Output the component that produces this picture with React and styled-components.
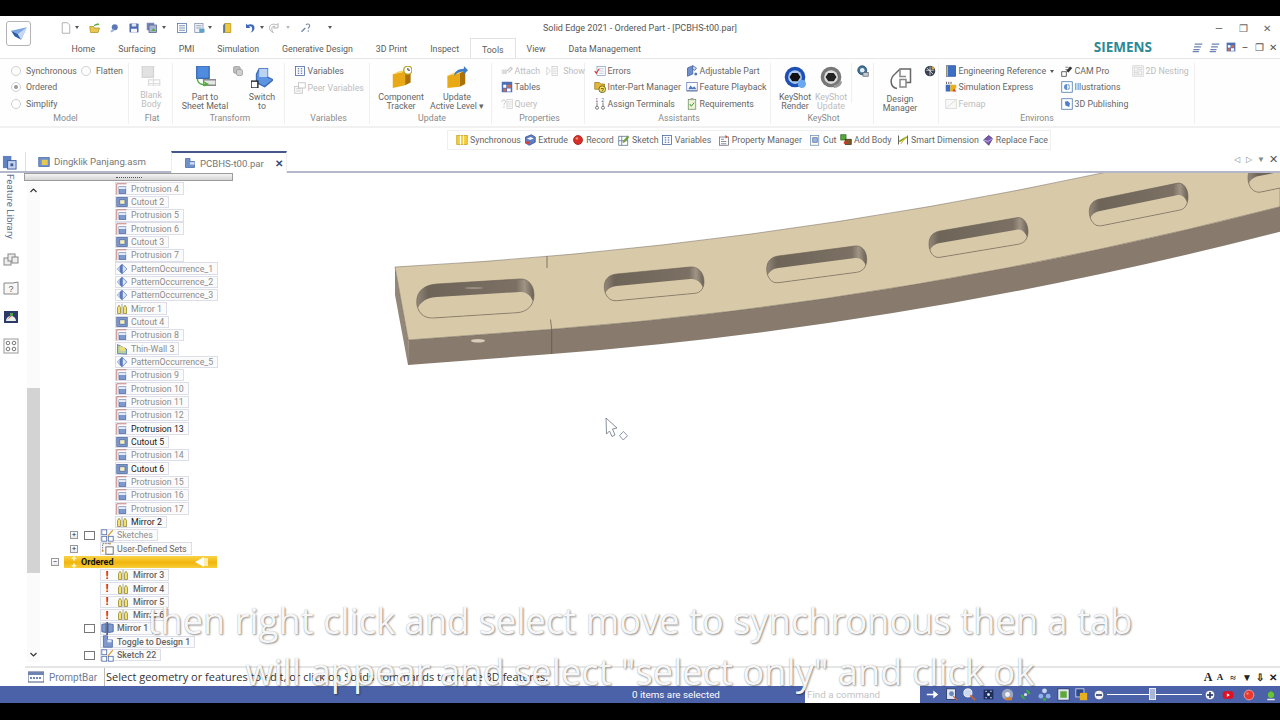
import React from 'react'
import styled, { createGlobalStyle } from 'styled-components'

const GlobalStyle = createGlobalStyle`
  html, body { margin: 0; padding: 0; background: #000; }
  * { box-sizing: border-box; }
`

const icons = {
  logo: <><path d="M1 5l14-3-5 11-3-5z" fill="#7ba6e0" /><path d="M1 5l6 3 3 5-6-3z" fill="#2e5ea8" /><path d="M7 8l8-6-5 11z" fill="#c4d8f2" /></>,
  page: <path d="M3 1h7l3 3v11H3z" fill="#fff" stroke="#9a9a9a" />,
  open: <><path d="M1 6h5l1 2h7l-2 6H2z" fill="#e8c94f" stroke="#b08f22" /><path d="M6 6c1-3 3-4 6-4l-1-1 3 2-3 2 1-1c-2 0-4 1-6 2z" fill="#56ad3c" /></>,
  dot: <><circle cx="9" cy="7" r="4" fill="#5d78b8" /><path d="M3 12l4-3 2 2-4 3z" fill="#9fb0d8" /></>,
  save: <><rect x="2" y="2" width="12" height="12" rx="1" fill="#4d6cb0" /><rect x="5" y="2" width="6" height="4" fill="#dfe6f4" /><rect x="4" y="9" width="8" height="5" fill="#f2f4fa" /></>,
  saveall: <><rect x="1" y="1" width="10" height="10" fill="#7387b8" /><rect x="4" y="4" width="10" height="10" fill="#a7b3cf" stroke="#52628c" /><path d="M7 12l3-4 3 4z" fill="#55ab3c" /></>,
  list: <><rect x="2" y="2" width="12" height="12" fill="#fff" stroke="#4f6fa8" /><path d="M4 5h8M4 8h8M4 11h8" stroke="#4f6fa8" /></>,
  sheet: <><rect x="1" y="2" width="11" height="12" fill="#eef1f7" stroke="#7f8ea8" /><path d="M3 5h7M3 8h7" stroke="#7f8ea8" /><rect x="7" y="9" width="7" height="5" fill="#5da2c8" /></>,
  book: <><path d="M5 2h8v12H5z" fill="#f0c93b" stroke="#b38d1c" /><path d="M3 4l2-2v12l-2 1z" fill="#3d5f9c" /></>,
  undo: <path d="M4 2v6h6L8 6c3-1 5 1 4 5-.4 1.500-1 2-2 3 4-1 6-4 5-8-1-3-5-4-9-2z" fill="#3f68b8" />,
  redo: <path d="M12 2v6H6l2-2c-3-1-5 1-4 5 .4 1.500 1 2 2 3-4-1-6-4-5-8 1-3 5-4 9-2z" fill="none" stroke="#9c9c9c" />,
  helpq: <><path d="M2 13l5-5" stroke="#7488b0" strokeWidth="2" /><path d="M8 4c1-2 5-2 5 1 0 2-2 2-2 4M11 11v2" fill="none" stroke="#7c8ca8" strokeWidth="1.500" /></>,
  slantlist: <path d="M4 3h11M3 7h10M2 11h9M1 14h9" fill="none" stroke="#6c84b4" strokeWidth="2" />,
  protrusion: <><path d="M1 15V1h13" fill="none" stroke="#b55a58" /><rect x="4" y="5" width="9" height="9" fill="#7f99cf" stroke="#51699f" /><rect x="4" y="5" width="9" height="3" fill="#e3eaf7" /></>,
  cutout: <><rect x="1" y="2" width="14" height="12" fill="#7c97cc" stroke="#4e689f" /><rect x="5" y="5" width="7" height="6" fill="#f3edc0" stroke="#4e689f" /></>,
  pattern: <><path d="M8 1l7 7-7 7-7-7z" fill="#5a78bb" /><path d="M9 3l5 5-5 5z" fill="#dde5f5" /><path d="M1 8l4-4v8z" fill="#c2cfeb" /></>,
  mirror: <><path d="M2 14V6l2-3 2 3v8z" fill="#f3e26c" stroke="#8e8130" /><path d="M8 1v14" stroke="#8d8d8d" /><path d="M10 14V6l2-3 2 3v8z" fill="#f3e26c" stroke="#8e8130" /></>,
  thinwall: <><path d="M2 2v12l12 1V8z" fill="#b8cfa0" stroke="#4f6fa8" /><path d="M5 4l7 2v5l-7-1z" fill="#e9de7e" /></>,
  sketch: <><rect x="1" y="1" width="6" height="6" fill="#fff" stroke="#4d6aa4" /><rect x="1" y="9" width="6" height="6" fill="#fff" stroke="#4d6aa4" /><rect x="9" y="9" width="6" height="6" fill="#fff" stroke="#4d6aa4" /><path d="M8 8l6-7 1 1-6 7z" fill="#d89a2c" /></>,
  sets: <><path d="M2 11V2h9" fill="none" stroke="#666" strokeDasharray="2 1" /><rect x="6" y="6" width="9" height="9" fill="#fff" stroke="#555" /><rect x="1" y="10" width="2" height="2" fill="#d28b22" /><rect x="10" y="1" width="2" height="2" fill="#d28b22" /></>,
  mirrorbody: <><path d="M1 3l5-1v11l-5-1z" fill="#7f99cf" stroke="#3f5c9c" /><path d="M9 2l6 1v9l-6 1z" fill="#7f99cf" stroke="#3f5c9c" /><path d="M7.500 0v16" stroke="#14244f" strokeWidth="1.500" /></>,
  toggle: <><path d="M3 1h5v5h6v9H3z" fill="#7f99cf" stroke="#4d6aa4" /><rect x="8" y="6" width="5" height="3" fill="#dfe6f4" /></>,
  boxes: <><rect x="1" y="7" width="7" height="7" fill="#eee" stroke="#888" /><rect x="5" y="3" width="7" height="7" fill="#eee" stroke="#888" /><rect x="9" y="6" width="6" height="6" fill="#eee" stroke="#888" /></>,
  folderq: <><path d="M1 3h9l5-1v12H1z" fill="#f7f7f7" stroke="#888" /><text x="8" y="12" fontSize="9" fontFamily="Liberation Sans" textAnchor="middle" fill="#666">?</text></>,
  gauge: <><rect x="1" y="2" width="14" height="12" fill="#2c3a6a" /><path d="M3 12a5 5 0 0 1 10 0z" fill="#e8f0e8" /><path d="M4 11l5-6 1 1z" fill="#c94040" /><path d="M7 4h3v3H7z" fill="#50a050" /></>,
  dots: <><rect x="1" y="1" width="14" height="14" fill="#fff" stroke="#999" /><circle cx="5" cy="5" r="1.800" fill="none" stroke="#777" /><circle cx="11" cy="5" r="1.800" fill="none" stroke="#777" /><circle cx="5" cy="11" r="1.800" fill="none" stroke="#777" /><circle cx="11" cy="11" r="1.800" fill="none" stroke="#777" /></>,
  docpart: <><rect x="1" y="1" width="9" height="13" fill="#5f82c4" /><rect x="6" y="6" width="9" height="9" fill="#c5d3ee" stroke="#3c5a9c" /><rect x="9" y="9" width="3" height="3" fill="#3c5a9c" /></>,
  asm: <><rect x="1" y="2" width="14" height="12" fill="#6f92cc" stroke="#4a6aa4" /><rect x="5" y="5" width="8" height="7" fill="#e8c850" /></>,
  par: <><path d="M2 2h6v4h6v8H2z" fill="#6f92cc" stroke="#4a6aa4" /><rect x="8" y="7" width="6" height="3" fill="#d9e2f4" /></>,
  blank: <><rect x="1" y="0" width="9" height="9" fill="#c8c8c8" stroke="#aaa" /><path d="M6 14h9M10 10v6M6 11h9v5H6z" fill="none" stroke="#bdbdbd" /></>,
  partsheet: <><rect x="2" y="0" width="9" height="9" fill="#4f8ce0" stroke="#3a6ab0" /><path d="M7 14h9v-4H7z" fill="#e6e6e6" stroke="#888" /><path d="M3 9c0 3 2 4 5 4l-1-2 4 2-4 2 1-1c-4 0-6-2-6-5z" fill="#4fae3a" /></>,
  grayboxes: <><rect x="2" y="2" width="9" height="9" rx="2" fill="#bcbcbc" stroke="#999" /><rect x="6" y="6" width="8" height="8" rx="2" fill="#d0d0d0" stroke="#999" /></>,
  switchto: <><path d="M6 2h6v6l4 2-6 5-6-3V6z" fill="#5f96e4" stroke="#3c6cb4" /><path d="M6 2h6v6H6z" fill="#bcd4f4" /><rect x="0" y="11" width="5" height="5" fill="#fff" stroke="#222" /></>,
  vars: <><rect x="2" y="2" width="12" height="12" fill="#fff" stroke="#3f5f9c" /><path d="M5 5h2M9 5h2M5 8h2M9 8h2M5 11h2M9 11h2" stroke="#3f5f9c" strokeWidth="1.500" /></>,
  peer: <><rect x="1" y="6" width="10" height="9" fill="#fff" stroke="#777" /><rect x="6" y="1" width="9" height="7" fill="#fff" stroke="#777" /><path d="M3 9h6M3 12h6" stroke="#777" /></>,
  tracker: <><path d="M2 6l9-2v10l-9 2z" fill="#e9a916" /><path d="M11 4l4-2v10l-4 2z" fill="#a97308" /><path d="M2 6l4-2 9-2-4 2z" fill="#f6d35c" /><circle cx="13" cy="3" r="3" fill="#fff" stroke="#b9a530" /><path d="M13 1.500V3h1.500" fill="none" stroke="#333" strokeWidth=".7" /></>,
  update: <><path d="M1 7l9-2v10l-9 1z" fill="#e9a916" /><path d="M10 5l4-2v10l-4 2z" fill="#a97308" /><path d="M1 7l4-2 9-2-4 2z" fill="#f6d35c" /><path d="M6 7c0-3 3-5 7-5V0l3 3-3 3V4c-3 0-5 1-7 3z" fill="#3f7cc8" /></>,
  attach: <><rect x="1" y="6" width="7" height="6" fill="#bbb" /><path d="M8 8l5-5 2 2-5 5" fill="none" stroke="#999" strokeWidth="1.500" /></>,
  show: <><path d="M1 3l5 5-5 5z" fill="none" stroke="#999" /><rect x="8" y="2" width="7" height="12" fill="#fff" stroke="#999" /><path d="M9 5h5M9 8h5M9 11h5" stroke="#999" /></>,
  tables: <><rect x="1" y="1" width="14" height="14" fill="#4f6fb4" /><rect x="3" y="5" width="4" height="4" fill="#fff" /><rect x="8" y="5" width="5" height="4" fill="#d66a4a" /><rect x="3" y="10" width="4" height="4" fill="#d66a4a" /><rect x="8" y="10" width="5" height="4" fill="#fff" /></>,
  query: <><path d="M1 5c0-3 5-3 5 0 0 2-2 2-2 4M4 11v2" fill="none" stroke="#888" strokeWidth="1.300" /><rect x="8" y="2" width="7" height="12" fill="#fff" stroke="#999" /><path d="M9 5h5M9 8h5M9 11h5" stroke="#999" /></>,
  errors: <><rect x="4" y="2" width="11" height="12" fill="#fff" stroke="#8aa0c4" /><path d="M7 5h6M7 8h6M7 11h6" stroke="#aab8d0" /><path d="M1 8l2 3 4-6" fill="none" stroke="#d13030" strokeWidth="1.500" /></>,
  interpart: <><path d="M1 2h6l2 2h5v7H1z" fill="#e2b93c" stroke="#97761a" /><circle cx="11" cy="11" r="4.500" fill="#f7e35c" stroke="#4a4a20" /><text x="11" y="14" fontSize="8" fontFamily="Liberation Sans" textAnchor="middle" fill="#222">?</text></>,
  terminals: <><circle cx="4" cy="13" r="2" fill="none" stroke="#555" /><circle cx="12" cy="13" r="2" fill="none" stroke="#555" /><path d="M4 11V6M12 11V6" stroke="#555" /><text x="2" y="5" fontSize="6" fontFamily="Liberation Sans" fill="#3f5f9c">1</text><text x="10" y="5" fontSize="6" fontFamily="Liberation Sans" fill="#3f5f9c">2</text></>,
  adjustable: <><path d="M2 4l7-3v11l-7 3z" fill="#6f8fd0" stroke="#3f5c9c" /><path d="M9 1l5 3-2 3-3-1z" fill="#d9e2f4" stroke="#3f5c9c" /><circle cx="13" cy="12" r="2" fill="#5d78b8" /></>,
  playback: <><rect x="1" y="2" width="14" height="11" fill="#fff" stroke="#5d78b8" /><path d="M3 11l3-5 3 3 2-2 3 4z" fill="#4e78c4" /><rect x="1" y="12" width="14" height="2" fill="#7d8db0" /></>,
  requirements: <><rect x="3" y="2" width="10" height="13" fill="#eef3d8" stroke="#6f8a5f" /><rect x="6" y="0" width="4" height="3" fill="#aaa" /><path d="M5 8l2 3 4-5" fill="none" stroke="#3c9a3c" strokeWidth="1.300" /></>,
  keyrender: <><circle cx="8" cy="8" r="7.500" fill="#1e50b4" /><circle cx="8" cy="8" r="5" fill="#aac8f0" /><path d="M4 8l2-3h4l2 3-2 3H6z" fill="#111" /><circle cx="13" cy="13" r="3" fill="#6aa8f0" /></>,
  keyupdate: <><circle cx="8" cy="8" r="7.500" fill="#777" /><circle cx="8" cy="8" r="5" fill="#ddd" /><path d="M4 8l2-3h4l2 3-2 3H6z" fill="#222" /><path d="M10 15c3 0 5-2 5-4" fill="none" stroke="#999" strokeWidth="2" /></>,
  globe: <><circle cx="7" cy="7" r="6" fill="#3f7398" stroke="#26485f" /><circle cx="7" cy="7" r="3" fill="#e8eef4" /><rect x="8" y="10" width="7" height="5" fill="#c0ccd8" stroke="#666" /></>,
  design: <><path d="M6 15C1 14 1 8 5 5l3-3h7v9h-4l-2 3" fill="none" stroke="#666" /><path d="M8 2v5h4" fill="none" stroke="#888" /><rect x="8" y="9" width="4" height="5" fill="#fff" stroke="#888" /></>,
  ball: <><circle cx="8" cy="8" r="7" fill="#3a4250" /><path d="M3 7h10M8 2v12M4 4l8 8" stroke="#e9e9e9" /><circle cx="12" cy="4" r="2" fill="#d2a13c" /></>,
  engref: <><rect x="2" y="1" width="12" height="14" fill="#3f6fc4" stroke="#274f98" /><rect x="2" y="1" width="2" height="14" fill="#e2b93c" /></>,
  simex: <><rect x="1" y="5" width="14" height="9" fill="#e8e8e8" /><path d="M1 5h6v9H1z" fill="#3f6fc4" /><path d="M7 5h8v4l-5 5H7z" fill="#e8b020" /><path d="M12 10l3 4h-5z" fill="#d04020" /><path d="M2 1v3M5 1v3M8 1v3" stroke="#333" /></>,
  femap: <><rect x="1" y="2" width="14" height="12" fill="#f6f6f6" stroke="#aaa" /><path d="M2 13L14 3" stroke="#aaa" /></>,
  cam: <><rect x="1" y="9" width="6" height="6" fill="#fff" stroke="#333" /><path d="M7 8l5-6 3 2-5 6z" fill="#333" /><path d="M6 3h4M6 6h4" stroke="#555" /></>,
  illus: <><rect x="1" y="1" width="14" height="14" fill="#fff" stroke="#3f6fa8" /><circle cx="8" cy="8" r="4" fill="#5f8fd0" /><path d="M8 4l4 4-4 4z" fill="#d9e8f8" /></>,
  pub3d: <><rect x="1" y="1" width="14" height="14" fill="#fff" stroke="#3f6fa8" /><path d="M5 5l4-1 3 3-1 5-5-2z" fill="#4f7fc8" /></>,
  nesting: <><rect x="1" y="1" width="14" height="14" fill="#f4f4f4" stroke="#aaa" /><rect x="3" y="3" width="4" height="5" fill="none" stroke="#aaa" /><rect x="9" y="3" width="4" height="3" fill="none" stroke="#aaa" /><rect x="3" y="10" width="4" height="3" fill="none" stroke="#aaa" /><rect x="9" y="8" width="4" height="5" fill="none" stroke="#aaa" /></>,
  sync: <><rect x="1" y="2" width="14" height="12" fill="#f2cf3e" stroke="#c89f18" /><path d="M6 2v12M10 2v12" stroke="#fff" strokeWidth="1.500" /></>,
  extrude: <><path d="M2 4l8-3 5 3v7l-8 4-5-3z" fill="#5f7fc4" stroke="#344f8f" /><path d="M4 6l5-2 4 2-5 2z" fill="#f3f3f3" /><rect x="2" y="10" width="6" height="3" fill="#d94040" /></>,
  record: <><circle cx="8" cy="8" r="6" fill="#d83028" stroke="#9a1a14" /><circle cx="6.500" cy="6" r="1.800" fill="#f08878" /></>,
  sketchcmd: <><rect x="1" y="3" width="12" height="12" fill="#fff" stroke="#55708f" /><path d="M5 3v12M1 9h12" stroke="#55708f" /><path d="M7 9l6-7 2 2-6 7-3 1z" fill="#6f9f3c" /></>,
  propmgr: <><rect x="2" y="4" width="12" height="11" fill="#fff" stroke="#667" /><path d="M4 7h4M4 10h7M4 13h7" stroke="#667" /><path d="M10 1l3 3-3 2z" fill="#d04a30" /></>,
  cut: <><rect x="2" y="2" width="11" height="13" fill="#fffbe0" stroke="#6f8fc0" /><rect x="5" y="5" width="6" height="6" fill="#9fb8e0" stroke="#4f6fa8" /></>,
  addbody: <><rect x="1" y="1" width="7" height="7" fill="#56a83a" stroke="#2f6a20" /><rect x="7" y="7" width="8" height="7" fill="#7d5a2c" stroke="#4a3010" /><path d="M5 10h4v3H5z" fill="#d83028" /></>,
  smartdim: <><path d="M2 2v12M14 2v12" stroke="#333" /><path d="M3 10L13 4" stroke="#78a820" strokeWidth="2" /><path d="M5 13l7-9" stroke="#e8b020" strokeWidth="1.500" /></>,
  replace: <><path d="M2 8l7-6 5 4-5 9z" fill="#7a58b0" stroke="#43307a" /><path d="M2 8l6 2 6-4" fill="none" stroke="#d9cdf0" /></>,
  promptbar: <><rect x="0" y="3" width="16" height="10" fill="#fff" stroke="#44587f" /><rect x="0" y="3" width="16" height="3" fill="#6f84b0" /><path d="M2 9h12" stroke="#7088b8" strokeDasharray="2 1" strokeWidth="2" /></>,
  arrowgo: <path d="M1 7h8V3l6 5-6 5V9H1z" fill="#fff" />,
  zoomarea: <><rect x="2" y="1" width="11" height="13" fill="#dfe6f2" stroke="#26365e" /><circle cx="8" cy="7" r="3" fill="#6d88b8" /><path d="M10 10l5 5" stroke="#d06030" strokeWidth="1.500" /></>,
  zoom: <><circle cx="6" cy="6" r="5" fill="#cbd8ee" stroke="#fff" /><path d="M9 9l6 6" stroke="#d06030" strokeWidth="2" /></>,
  fit: <><rect x="2" y="2" width="12" height="12" fill="#1d2f60" /><path d="M4 4h2M10 4h2M4 12h2M10 12h2M7 7h2v2H7z" stroke="#fff" fill="#fff" /></>,
  views: <><circle cx="8" cy="8" r="7" fill="#9aa6bc" /><circle cx="8" cy="8" r="3" fill="#eef" /><path d="M4 13l8-2 2 4H6z" fill="#d08030" /></>,
  spin: <><path d="M8 2a6 6 0 0 1 6 6l-3-1z" fill="#38b038" /><path d="M8 14a6 6 0 0 1-6-6l3 1z" fill="#38b038" /><circle cx="8" cy="8" r="2" fill="#dde" /></>,
  flower: <><circle cx="8" cy="3.500" r="3" fill="#c7d8f4" /><circle cx="3.500" cy="10" r="3" fill="#8fb0e8" /><circle cx="12.500" cy="10" r="3" fill="#8fb0e8" /><circle cx="8" cy="14" r="2" fill="#38b038" /></>,
  shaded: <><rect x="1" y="1" width="14" height="14" fill="#dfe6f2" stroke="#26365e" /><rect x="4" y="4" width="8" height="8" fill="#5fa838" /></>,
  shaded2: <><rect x="1" y="1" width="10" height="10" fill="#2f4a8c" stroke="#dde" /><rect x="6" y="6" width="9" height="9" fill="#e8b020" /></>,
  minus: <><circle cx="8" cy="8" r="6.500" fill="#f2f2f2" stroke="#33477f" /><rect x="4" y="7" width="8" height="2" fill="#1d2f60" /></>,
  plus: <><circle cx="8" cy="8" r="6.500" fill="#f2f2f2" stroke="#33477f" /><path d="M4 7h3V4h2v3h3v2H9v3H7V9H4z" fill="#1d2f60" /></>,
  redtube: <><rect x="1" y="3" width="14" height="10" rx="3" fill="#e01020" /><path d="M6.500 5.500l4 2.500-4 2.500z" fill="#fff" /></>,
  reddot: <><circle cx="8" cy="8" r="6.500" fill="#e83830" stroke="#f8b8a8" /><circle cx="6" cy="6" r="1.500" fill="#f89888" /></>,
  greenup: <><path d="M8 2l5 5H3z" fill="#48b020" /><circle cx="8" cy="8" r="4" fill="#68c830" /><rect x="3" y="13" width="10" height="2" fill="#e8e8e8" /></>
}

const Page = styled.div`
  position: relative;
  width: 1280px;
  height: 720px;
  overflow: hidden;
  display: flex;
  flex-direction: column;
  background: #fff;
  font-family: Roboto, "Open Sans", sans-serif;
  font-size: 8.8px;
  color: #5c5c5c;
`
const BlackBar = styled.div`
  flex: none;
  height: ${p => p.$h}px;
  background: #000;
`
const IconSvg = styled.svg`
  flex: none;
  display: block;
  width: ${p => p.$size}px;
  height: ${p => p.$size}px;
  opacity: ${p => (p.$off ? 0.5 : 1)};
`
function Ico({ name, size = 12, off }) {
  return <IconSvg $size={size} $off={off} viewBox="0 0 16 16">{icons[name]}</IconSvg>
}

/* header */
const Header = styled.div`
  flex: none;
  height: 42px;
  display: flex;
`
const LogoCell = styled.div`
  flex: none;
  width: 60px;
  padding: 5px 0 0 6px;
`
const LogoBox = styled.div`
  width: 25px;
  height: 25px;
  border: 1px solid #b4b4b4;
  border-radius: 3px;
  display: flex;
  align-items: center;
  justify-content: center;
`
const HeaderStack = styled.div`
  flex: 1;
  display: flex;
  flex-direction: column;
`
const TitleRow = styled.div`
  height: 25px;
  display: flex;
  align-items: center;
  padding-bottom: 2px;
`
const Qat = styled.div`
  width: 483px;
  display: flex;
  align-items: center;
`
const QatSlot = styled.div`
  flex: none;
  width: ${p => p.$w}px;
  display: flex;
  justify-content: center;
`
const Caret = styled.span`
  display: block;
  width: 0;
  height: 0;
  border-left: 2.5px solid transparent;
  border-right: 2.5px solid transparent;
  border-top: 3px solid ${p => p.$color || '#555'};
  margin-left: ${p => p.$ml || 0}px;
`
const Title = styled.div`
  font-size: 9px;
  color: #555;
  white-space: nowrap;
`
const WinButtons = styled.div`
  margin-left: auto;
  display: flex;
  padding-top: 2px;
  padding-right: 1px;
`
const WinButton = styled.div`
  width: 24px;
  height: 14px;
  display: flex;
  align-items: center;
  justify-content: center;
  color: #666;
  font-size: 10px;
`
const TabRow = styled.div`
  height: 17px;
  display: flex;
  align-items: flex-end;
`
const RibbonTab = styled.div`
  height: 20px;
  padding: 0 11.5px;
  line-height: 22px;
  white-space: nowrap;
  ${p => p.$active && 'background:#fff;border:1px solid #e2e2e2;border-bottom:0;margin:0 -1px;'}
`
const SiemensArea = styled.div`
  margin-left: auto;
  display: flex;
  align-items: center;
  height: 22px;
`
const Siemens = styled.div`
  font-family: "Open Sans", sans-serif;
  font-size: 13.5px;
  font-weight: 700;
  color: #2d8a95;
  margin-right: 37px;
`
const MiniBtn = styled.div`
  width: ${p => p.$w}px;
  display: flex;
  justify-content: center;
  color: #555;
  font-size: 10px;
`

/* ribbon */
const Ribbon = styled.div`
  flex: none;
  height: 70px;
  display: flex;
  border-top: 1px solid #e6e6e6;
  border-bottom: 2px solid #f1f1f1;
  background: #fefefe;
`
const Group = styled.div`
  flex: none;
  width: ${p => p.$w}px;
  margin: 4px 0 2px;
  display: flex;
  flex-direction: column;
  border-right: 1px solid #efefef;
`
const GroupBody = styled.div`
  flex: 1;
  display: flex;
  padding-left: ${p => p.$pl || 0}px;
  min-height: 0;
`
const GroupName = styled.div`
  height: 12px;
  line-height: 12px;
  text-align: center;
  padding-left: 3px;
  padding-right: ${p => p.$pr || 0}px;
  color: #8a8a8a;
  font-size: 8.8px;
`
const Col = styled.div`
  flex: none;
  width: ${p => p.$w}px;
  display: flex;
  flex-direction: column;
`
const SmallRow = styled.div`
  height: 16.8px;
  display: flex;
  align-items: center;
  gap: ${p => (p.$gap === undefined ? 1.5 : p.$gap)}px;
  white-space: nowrap;
  color: ${p => (p.$off ? '#bdbdbd' : '#666')};
`
const Radio = styled.span`
  flex: none;
  width: 10px;
  height: 10px;
  border-radius: 50%;
  border: 1px solid #cfcfcf;
  margin-right: 5px;
  margin-left: ${p => p.$ml || 0}px;
  display: flex;
  align-items: center;
  justify-content: center;
  &::after {
    content: '';
    display: ${p => (p.$on ? 'block' : 'none')};
    width: 4px;
    height: 4px;
    border-radius: 50%;
    background: #999;
  }
`
const BigButton = styled.div`
  flex: none;
  width: ${p => p.$w}px;
  padding-top: 3px;
  display: flex;
  flex-direction: column;
  align-items: center;
  text-align: center;
  line-height: 9.4px;
  color: ${p => (p.$off ? '#bdbdbd' : '#666')};
  span { margin-top: 5px; white-space: pre-line; }
`
const TopIcon = styled.div`
  flex: none;
  width: ${p => p.$w}px;
  padding-top: ${p => (p.$pt === undefined ? 2 : p.$pt)}px;
  display: flex;
  justify-content: center;
`
const SideIcon = styled(TopIcon)`
  height: 40px;
  margin-left: 5px;
  border-left: 1px solid #efefef;
`

/* floating command bar */
const CommandStrip = styled.div`
  flex: none;
  height: 24px;
  padding: 2px 0 2px 447px;
`
const CommandBox = styled.div`
  width: 604px;
  height: 20px;
  display: flex;
  align-items: center;
  padding-left: 8px;
  border: 1px solid #efefef;
  color: #666;
`
const CommandItem = styled.div`
  display: flex;
  align-items: center;
  gap: 2px;
  margin-right: ${p => p.$mr}px;
  white-space: nowrap;
`

/* doc tabs */
const DocBar = styled.div`
  flex: none;
  height: 21px;
  display: flex;
  align-items: stretch;
  border-bottom: 2px solid #b3b7c9;
`
const RailHead = styled.div`
  flex: none;
  width: 26px;
  padding: 3px 0 0 2px;
  border-right: 1px solid #e0e0e0;
`
const DocTab = styled.div`
  flex: none;
  width: ${p => p.$w}px;
  margin-left: ${p => p.$ml || 0}px;
  padding-left: ${p => p.$pl}px;
  display: flex;
  align-items: center;
  gap: 4px;
  font-size: 9.6px;
  color: #777;
  white-space: nowrap;
  ${p => p.$active && 'background:#fff;border-top:2px solid #46578c;border-left:1px solid #eee;border-right:1px solid #eee;margin-top:-1px;margin-bottom:-2px;'}
`
const CloseMark = styled.span`
  margin-left: auto;
  margin-right: 3px;
  font-size: 10px;
  color: #344a7c;
  font-weight: 700;
`
const DocNav = styled.div`
  margin-left: auto;
  display: flex;
  align-items: center;
  padding: 0 1px 4px 0;
`
const DocNavBtn = styled.span`
  width: 12px;
  text-align: center;
  font-size: ${p => p.$fs || 8}px;
  color: ${p => p.$color || '#888'};
`

/* main */
const Main = styled.div`
  flex: 1;
  min-height: 0;
  display: flex;
`
const Rail = styled.div`
  flex: none;
  width: 25px;
  display: flex;
  flex-direction: column;
  align-items: center;
  gap: 13px;
  padding-top: 1px;
  padding-right: 4px;
`
const RailText = styled.div`
  writing-mode: vertical-rl;
  height: 66px;
  font-size: 9.8px;
  color: #64708f;
  white-space: nowrap;
  margin-bottom: -2px;
`
const TreePanel = styled.div`
  flex: none;
  width: 215px;
  display: flex;
  flex-direction: column;
`
const Splitter = styled.div`
  flex: none;
  width: 209px;
  height: 8px;
  margin: 0 0 1px -1px;
  border: 1px solid #9c9c9c;
  background: linear-gradient(#f4f4f4, #d4d4d4);
  display: flex;
  align-items: center;
  justify-content: center;
  &::after {
    content: '';
    width: 26px;
    border-top: 1px dotted #555;
  }
`
const TreeBody = styled.div`
  flex: 1;
  display: flex;
  min-height: 0;
`
const Scroll = styled.div`
  flex: none;
  width: 13px;
  height: 480px;
  margin-left: 2px;
  background: #fbfbfb;
  display: flex;
  flex-direction: column;
`
const Chevron = styled.svg`
  flex: none;
  display: block;
  width: 13px;
  height: 16px;
`
const ScrollTrack = styled.div`
  flex: 1;
  padding-top: 190px;
`
const Thumb = styled.div`
  height: 185px;
  background: #d3d3d3;
`
const List = styled.div`
  flex: 1;
`
const Row = styled.div`
  height: 13.33px;
  display: flex;
  align-items: center;
  padding-left: ${p => p.$indent}px;
`
const Expander = styled.span`
  flex: none;
  width: 8px;
  height: 8px;
  margin-right: ${p => p.$mr}px;
  border: 1px solid #999;
  background: linear-gradient(#fff, #eaeaea);
  display: flex;
  align-items: center;
  justify-content: center;
  font-size: 8px;
  line-height: 1;
  color: #333;
`
const Check = styled.span`
  flex: none;
  width: 11px;
  height: 9px;
  margin-right: 5px;
  border: 1px solid #777;
  background: #fff;
`
const Tile = styled.div`
  height: 12.4px;
  display: inline-flex;
  align-items: center;
  border: 1px solid #dcdfea;
  background: #fbfbfb;
  padding-right: 4px;
  white-space: nowrap;
  font-size: 8.8px;
  gap: ${p => p.$gap}px;
  font-weight: ${p => (p.$strong ? 500 : 400)};
  color: ${p => p.$color};
`
const Bang = styled.span`
  flex: none;
  width: 12px;
  text-align: center;
  color: #d0111b;
  font-weight: 800;
  font-size: 10px;
`
const OrderedBar = styled.div`
  flex: none;
  width: 153px;
  height: 12.4px;
  display: flex;
  align-items: center;
  padding-left: 7px;
  background: linear-gradient(#f8d44a, #f2b50c 55%, #f7cf3c);
  color: #111;
  font-weight: 700;
  font-size: 9px;
`
const OrderedMark = styled.svg`
  flex: none;
  display: block;
  width: 6px;
  height: 12px;
  margin-right: 4px;
`
const OrderedArrow = styled.svg`
  flex: none;
  display: block;
  width: 13px;
  height: 10px;
  margin-left: auto;
  margin-right: 9px;
`
const Viewport = styled.div`
  flex: 1;
  min-width: 0;
`
const Scene = styled.svg`
  display: block;
  width: 100%;
  height: 100%;
`

/* prompt + status */
const PromptBar = styled.div`
  flex: none;
  height: 20px;
  margin-left: 25px;
  display: flex;
  align-items: center;
  border-top: 2px solid #e6e6e6;
`
const PromptName = styled.div`
  flex: none;
  width: 79px;
  padding-left: 3px;
  display: flex;
  align-items: center;
  gap: 5px;
  font-size: 10px;
  color: #6f7c96;
`
const PromptText = styled.div`
  flex: none;
  height: 18px;
  line-height: 17px;
  padding-left: 1px;
  border-left: 1px solid #bbb;
  font-family: "Open Sans", sans-serif;
  font-size: 11px;
  color: #333;
  white-space: nowrap;
`
const PromptTools = styled.div`
  margin-left: auto;
  display: flex;
  align-items: center;
  font-family: "Liberation Serif", serif;
  color: #222;
`
const PromptTool = styled.span`
  width: ${p => p.$w}px;
  text-align: center;
  font-size: ${p => p.$fs || 10}px;
  font-weight: 700;
`
const StatusBar = styled.div`
  flex: none;
  height: 17px;
  display: flex;
  align-items: center;
  background: #4b62a8;
  color: #fff;
  font-size: 9.8px;
`
const StatusText = styled.div`
  flex: none;
  width: 173px;
  margin-left: 632px;
  white-space: nowrap;
`
const FindBox = styled.div`
  flex: none;
  width: 115px;
  height: 17px;
  line-height: 17px;
  padding-left: 2px;
  background: #fff;
  color: #c4c4c4;
  margin-right: 3px;
`
const StatusSlot = styled.div`
  flex: none;
  width: ${p => p.$w || 18.7}px;
  display: flex;
  justify-content: center;
`
const Slider = styled.div`
  flex: none;
  position: relative;
  width: 95px;
  height: 1px;
  background: #fff;
`
const SliderKnob = styled.div`
  position: absolute;
  left: 42px;
  top: -6px;
  width: 7px;
  height: 12px;
  background: #aab6d6;
  border: 1px solid #e8ecf6;
`
const Caption = styled.div`
  position: absolute;
  left: 0;
  right: 0;
  top: 595px;
  text-align: center;
  font-family: "Open Sans", sans-serif;
  font-size: 36.2px;
  letter-spacing: 0.05px;
  line-height: 51px;
  color: rgba(255, 255, 255, 0.95);
  text-shadow: 1px 1px 2px rgba(0, 0, 0, 0.4), 0 0 1px rgba(0, 0, 0, 0.35);
  white-space: nowrap;
  pointer-events: none;
`

const P = (label, color = '#8c8c8c') => ({ label, icon: 'protrusion', color })
const C = (label, color = '#8c8c8c') => ({ label, icon: 'cutout', color })
const O = label => ({ label, icon: 'pattern', color: '#8c8c8c' })
const M = (label, color = '#8c8c8c') => ({ label, icon: 'mirror', color })

const features = [
  P('Protrusion 4'), C('Cutout 2'), P('Protrusion 5'), P('Protrusion 6'), C('Cutout 3'), P('Protrusion 7'),
  O('PatternOccurrence_1'), O('PatternOccurrence_2'), O('PatternOccurrence_3'), M('Mirror 1'), C('Cutout 4'),
  P('Protrusion 8'), { label: 'Thin-Wall 3', icon: 'thinwall', color: '#8c8c8c' }, O('PatternOccurrence_5'),
  P('Protrusion 9'), P('Protrusion 10'), P('Protrusion 11'), P('Protrusion 12'), P('Protrusion 13', '#222'),
  C('Cutout 5', '#222'), P('Protrusion 14'), C('Cutout 6', '#222'), P('Protrusion 15'), P('Protrusion 16'),
  P('Protrusion 17'), M('Mirror 2', '#222')
]

const slots = [
  { l: [416.7, 301.7], r: [534, 295], tl: [436.7, 284], tr: [520, 279], bl: [433, 318], br: [516.7, 312.7], d: 13 },
  { l: [604.3, 286.7], r: [704, 281.7], tl: [616.7, 274], tr: [690, 267], bl: [616.7, 300.7], br: [695, 293.3], d: 12 },
  { l: [766.7, 269], r: [866.7, 259.3], tl: [778.3, 256], tr: [855, 246], bl: [778.3, 282.7], br: [856.7, 272.3], d: 12 },
  { l: [929, 244], r: [1028, 231.7], tl: [940, 231], tr: [1016.7, 217.7], bl: [940, 257.3], br: [1018, 244.3], d: 12 },
  { l: [1089.3, 211.7], r: [1188, 196.7], tl: [1100, 199], tr: [1176.7, 183.3], bl: [1101.7, 225.7], br: [1180, 210], d: 12 },
  { l: [1248, 178], r: [1346, 163], tl: [1259, 165], tr: [1335, 150], bl: [1261, 192], br: [1338, 176], d: 11 }
]

const mix = (a, b, t) => a + (b - a) * t

function slotPath(s) {
  const k = 0.6
  const m = (s.tr[1] - s.tl[1]) / (s.tr[0] - s.tl[0])
  return [
    `M${s.l[0]} ${s.l[1]}`,
    `C${s.l[0]} ${mix(s.l[1], s.tl[1], k)} ${mix(s.tl[0], s.l[0], k)} ${s.tl[1] + m * (s.l[0] - s.tl[0]) * k} ${s.tl[0]} ${s.tl[1]}`,
    `L${s.tr[0]} ${s.tr[1]}`,
    `C${mix(s.tr[0], s.r[0], k)} ${s.tr[1] + m * (s.r[0] - s.tr[0]) * k} ${s.r[0]} ${mix(s.r[1], s.tr[1], k)} ${s.r[0]} ${s.r[1]}`,
    `C${s.r[0]} ${mix(s.r[1], s.br[1], k)} ${mix(s.br[0], s.r[0], k)} ${s.br[1] + m * (s.r[0] - s.br[0]) * k} ${s.br[0]} ${s.br[1]}`,
    `L${s.bl[0]} ${s.bl[1]}`,
    `C${mix(s.bl[0], s.l[0], k)} ${s.bl[1] + m * (s.l[0] - s.bl[0]) * k} ${s.l[0]} ${mix(s.l[1], s.bl[1], k)} ${s.l[0]} ${s.l[1]}Z`
  ].join(' ')
}

function Slot({ s, id }) {
  const d = slotPath(s)
  return (
    <>
      <clipPath id={id}><path d={d} /></clipPath>
      <path d={d} fill="url(#wall)" />
      <g clipPath={`url(#${id})`}>
        <path d={d} transform={`translate(0 ${s.d})`} fill="#d8c9a9" />
      </g>
      <path d={d} fill="none" stroke="#6a6052" strokeWidth="0.6" />
    </>
  )
}

function Part() {
  const top = 'M395 267 Q751 248.500 1107 172 L1280 172 L1280 206.700 Q914 301 551.700 329.300 L408.300 340Z'
  const side = 'M408.300 340 L551.700 329.300 Q914 301 1280 206.700 L1280 231.700 Q914 326 551.700 354 L408 365Z'
  return (
    <Scene viewBox="240 173 1040 493" preserveAspectRatio="none">
      <defs>
        <linearGradient id="wall" x1="0" x2="1" y1="0" y2="0">
          <stop offset="0" stopColor="#93887a" />
          <stop offset="0.1" stopColor="#6e6458" />
          <stop offset="0.85" stopColor="#7b7063" />
          <stop offset="0.92" stopColor="#a09585" />
          <stop offset="1" stopColor="#6a6054" />
        </linearGradient>
      </defs>
      <path d="M395 267 L395 295 L408 365 L408.300 340Z" fill="#93877a" />
      <path d={side} fill="#887b6d" />
      <path d={top} fill="#d8c9a9" stroke="#6a6052" strokeWidth="0.5" />
      {slots.map((s, i) => <Slot key={i} s={s} id={`slot${i}`} />)}
      <path d="M547 256v12M550.500 319.500l1.200 10M551.700 329.300V354" stroke="#5b5247" strokeWidth="0.7" fill="none" />
      <ellipse cx="478" cy="340.700" rx="7" ry="1.700" fill="#d8cdb8" />
      <ellipse cx="474" cy="288" rx="9" ry="1" fill="#9a9082" />
      <path d="M606 418 L617 428 L612.500 429 L615 435 L612 436.500 L609.500 431 L606.500 434Z" fill="#fff" stroke="#6b7280" strokeWidth="0.8" />
      <path d="M623.300 431.500 L627.500 435.700 L623.300 440 L619.500 435.700Z" fill="#fff" stroke="#6b7a99" strokeWidth="0.8" />
    </Scene>
  )
}

export default function App() {
  return (
    <Page>
      <GlobalStyle />
      <BlackBar $h={16} />
      <Header>
        <LogoCell><LogoBox><Ico name="logo" size={18} /></LogoBox></LogoCell>
        <HeaderStack>
          <TitleRow>
            <Qat>
              <QatSlot $w={11}><Ico name="page" /></QatSlot>
              <QatSlot $w={12}><Caret /></QatSlot>
              <QatSlot $w={24}><Ico name="open" /></QatSlot>
              <QatSlot $w={14}><Ico name="dot" /></QatSlot>
              <QatSlot $w={26}><Ico name="save" /></QatSlot>
              <QatSlot $w={10}><Ico name="saveall" /></QatSlot>
              <QatSlot $w={14}><Caret /></QatSlot>
              <QatSlot $w={22}><Ico name="list" /></QatSlot>
              <QatSlot $w={14}><Ico name="sheet" /></QatSlot>
              <QatSlot $w={6}><Caret /></QatSlot>
              <QatSlot $w={28}><Ico name="book" /></QatSlot>
              <QatSlot $w={16}><Ico name="undo" /></QatSlot>
              <QatSlot $w={10}><Caret /></QatSlot>
              <QatSlot $w={16}><Ico name="redo" /></QatSlot>
              <QatSlot $w={10}><Caret $color="#bbb" /></QatSlot>
              <QatSlot $w={26}><Ico name="helpq" /></QatSlot>
              <QatSlot $w={22}><Caret /></QatSlot>
            </Qat>
            <Title>Solid Edge 2021 - Ordered Part - [PCBHS-t00.par]</Title>
            <WinButtons>
              <WinButton>—</WinButton>
              <WinButton>❐</WinButton>
              <WinButton>✕</WinButton>
            </WinButtons>
          </TitleRow>
          <TabRow>
            <RibbonTab>Home</RibbonTab>
            <RibbonTab>Surfacing</RibbonTab>
            <RibbonTab>PMI</RibbonTab>
            <RibbonTab>Simulation</RibbonTab>
            <RibbonTab>Generative Design</RibbonTab>
            <RibbonTab>3D Print</RibbonTab>
            <RibbonTab>Inspect</RibbonTab>
            <RibbonTab $active>Tools</RibbonTab>
            <RibbonTab>View</RibbonTab>
            <RibbonTab>Data Management</RibbonTab>
            <SiemensArea>
              <Siemens>SIEMENS</Siemens>
              <MiniBtn $w={17}><Ico name="slantlist" size={11} /></MiniBtn>
              <MiniBtn $w={17}><Ico name="slantlist" size={11} /></MiniBtn>
              <MiniBtn $w={15}><Ico name="tables" size={10} /></MiniBtn>
              <MiniBtn $w={14}>–</MiniBtn>
              <MiniBtn $w={14}>❐</MiniBtn>
              <MiniBtn $w={14}>✕</MiniBtn>
            </SiemensArea>
          </TabRow>
        </HeaderStack>
      </Header>

      <Ribbon>
        <Group $w={129}>
          <GroupBody $pl={11}>
            <Col $w={118}>
              <SmallRow $gap={0}><Radio />Synchronous<Radio $ml={4} />Flatten</SmallRow>
              <SmallRow $gap={0}><Radio $on />Ordered</SmallRow>
              <SmallRow $gap={0}><Radio />Simplify</SmallRow>
            </Col>
          </GroupBody>
          <GroupName>Model</GroupName>
        </Group>
        <Group $w={44}>
          <GroupBody>
            <BigButton $w={44} $off><Ico name="blank" size={20} off /><span>{'Blank\nBody'}</span></BigButton>
          </GroupBody>
          <GroupName>Flat</GroupName>
        </Group>
        <Group $w={112}>
          <GroupBody $pl={7}>
            <BigButton $w={50}><Ico name="partsheet" size={22} /><span>{'Part to\nSheet Metal'}</span></BigButton>
            <TopIcon $w={16}><Ico name="grayboxes" /></TopIcon>
            <BigButton $w={32}><Ico name="switchto" size={22} /><span>{'Switch\nto'}</span></BigButton>
          </GroupBody>
          <GroupName>Transform</GroupName>
        </Group>
        <Group $w={85}>
          <GroupBody $pl={9}>
            <Col $w={76}>
              <SmallRow><Ico name="vars" />Variables</SmallRow>
              <SmallRow $off><Ico name="peer" off />Peer Variables</SmallRow>
            </Col>
          </GroupBody>
          <GroupName>Variables</GroupName>
        </Group>
        <Group $w={122}>
          <GroupBody $pl={5}>
            <BigButton $w={52}><Ico name="tracker" size={22} /><span>{'Component\nTracker'}</span></BigButton>
            <BigButton $w={60}><Ico name="update" size={22} /><span>{'Update\nActive Level ▾'}</span></BigButton>
          </GroupBody>
          <GroupName>Update</GroupName>
        </Group>
        <Group $w={93}>
          <GroupBody $pl={9}>
            <Col $w={84}>
              <SmallRow $off><Ico name="attach" off />Attach<TopIcon $w={20} $pt={0}><Ico name="show" off /></TopIcon>Show</SmallRow>
              <SmallRow><Ico name="tables" />Tables</SmallRow>
              <SmallRow $off><Ico name="query" off />Query</SmallRow>
            </Col>
          </GroupBody>
          <GroupName>Properties</GroupName>
        </Group>
        <Group $w={186}>
          <GroupBody $pl={9}>
            <Col $w={92}>
              <SmallRow><Ico name="errors" />Errors</SmallRow>
              <SmallRow><Ico name="interpart" />Inter-Part Manager</SmallRow>
              <SmallRow><Ico name="terminals" />Assign Terminals</SmallRow>
            </Col>
            <Col $w={80}>
              <SmallRow><Ico name="adjustable" />Adjustable Part</SmallRow>
              <SmallRow><Ico name="playback" />Feature Playback</SmallRow>
              <SmallRow><Ico name="requirements" />Requirements</SmallRow>
            </Col>
          </GroupBody>
          <GroupName>Assistants</GroupName>
        </Group>
        <Group $w={103}>
          <GroupBody $pl={3}>
            <BigButton $w={42}><Ico name="keyrender" size={22} /><span>{'KeyShot\nRender'}</span></BigButton>
            <BigButton $w={30} $off><Ico name="keyupdate" size={22} /><span>{'KeyShot\nUpdate'}</span></BigButton>
            <SideIcon $w={22}><Ico name="globe" /></SideIcon>
          </GroupBody>
          <GroupName>KeyShot</GroupName>
        </Group>
        <Group $w={65}>
          <GroupBody $pl={4}>
            <BigButton $w={44}><Ico name="design" size={24} /><span>{'Design\nManager'}</span></BigButton>
            <TopIcon $w={16}><Ico name="ball" /></TopIcon>
          </GroupBody>
        </Group>
        <Group $w={256}>
          <GroupBody $pl={6}>
            <Col $w={116}>
              <SmallRow><Ico name="engref" />Engineering Reference<Caret $ml={2} /></SmallRow>
              <SmallRow><Ico name="simex" />Simulation Express</SmallRow>
              <SmallRow $off><Ico name="femap" off />Femap</SmallRow>
            </Col>
            <Col $w={71}>
              <SmallRow><Ico name="cam" />CAM Pro</SmallRow>
              <SmallRow><Ico name="illus" />Illustrations</SmallRow>
              <SmallRow><Ico name="pub3d" />3D Publishing</SmallRow>
            </Col>
            <Col $w={60}>
              <SmallRow $off><Ico name="nesting" off />2D Nesting</SmallRow>
            </Col>
          </GroupBody>
          <GroupName $pr={62}>Environs</GroupName>
        </Group>
      </Ribbon>

      <CommandStrip>
        <CommandBox>
          <CommandItem $mr={3.3}><Ico name="sync" />Synchronous</CommandItem>
          <CommandItem $mr={4.3}><Ico name="extrude" />Extrude</CommandItem>
          <CommandItem $mr={4.3}><Ico name="record" />Record</CommandItem>
          <CommandItem $mr={2.2}><Ico name="sketchcmd" />Sketch</CommandItem>
          <CommandItem $mr={6.5}><Ico name="vars" />Variables</CommandItem>
          <CommandItem $mr={7}><Ico name="propmgr" />Property Manager</CommandItem>
          <CommandItem $mr={3.6}><Ico name="cut" />Cut</CommandItem>
          <CommandItem $mr={5.7}><Ico name="addbody" />Add Body</CommandItem>
          <CommandItem $mr={3}><Ico name="smartdim" />Smart Dimension</CommandItem>
          <CommandItem $mr={0}><Ico name="replace" />Replace Face</CommandItem>
        </CommandBox>
      </CommandStrip>

      <DocBar>
        <RailHead><Ico name="docpart" size={15} /></RailHead>
        <DocTab $w={133} $ml={12} $pl={0}><Ico name="asm" />Dingklik Panjang.asm</DocTab>
        <DocTab $active $w={116} $pl={12}><Ico name="par" />PCBHS-t00.par<CloseMark>✕</CloseMark></DocTab>
        <DocNav>
          <DocNavBtn>◁</DocNavBtn>
          <DocNavBtn>▷</DocNavBtn>
          <DocNavBtn>▼</DocNavBtn>
          <DocNavBtn $fs={11} $color="#555">✕</DocNavBtn>
        </DocNav>
      </DocBar>

      <Main>
        <Rail>
          <RailText>Feature Library</RailText>
          <Ico name="boxes" size={16} />
          <Ico name="folderq" size={16} />
          <Ico name="gauge" size={16} />
          <Ico name="dots" size={16} />
        </Rail>
        <TreePanel>
          <Splitter />
          <TreeBody>
            <Scroll>
              <Chevron viewBox="0 0 13 16"><path d="M3.500 10l3-3 3 3" fill="none" stroke="#333" strokeWidth="1.200" /></Chevron>
              <ScrollTrack><Thumb /></ScrollTrack>
              <Chevron viewBox="0 0 13 16"><path d="M3.500 7l3 3 3-3" fill="none" stroke="#333" strokeWidth="1.200" /></Chevron>
            </Scroll>
            <List>
              {features.map(f => (
                <Row key={f.label} $indent={75}>
                  <Tile $gap={3} $color={f.color}><Ico name={f.icon} />{f.label}</Tile>
                </Row>
              ))}
              <Row $indent={30}>
                <Expander $mr={6}>+</Expander><Check />
                <Tile $gap={3} $color="#8c8c8c"><Ico name="sketch" size={13} />Sketches</Tile>
              </Row>
              <Row $indent={30}>
                <Expander $mr={22}>+</Expander>
                <Tile $gap={3} $color="#666"><Ico name="sets" size={13} />User-Defined Sets</Tile>
              </Row>
              <Row $indent={11}>
                <Expander $mr={5}>−</Expander>
                <OrderedBar>
                  <OrderedMark viewBox="0 0 6 12"><path d="M3 0l3 3H4v1.500H2V3H0zM3 12L0 9h2V7.500h2V9h2z" fill="#fff3b8" /></OrderedMark>
                  Ordered
                  <OrderedArrow viewBox="0 0 13 10"><path d="M0 5l9-5v10z" fill="#fff" /><rect x="9" y="1" width="4" height="8" fill="#fbeeb0" /></OrderedArrow>
                </OrderedBar>
              </Row>
              {['Mirror 3', 'Mirror 4', 'Mirror 5', 'Mirror 6'].map(label => (
                <Row key={label} $indent={60}>
                  <Tile $gap={4} $strong $color="#666"><Bang>!</Bang><Ico name="mirror" />{label}</Tile>
                </Row>
              ))}
              <Row $indent={44}>
                <Check />
                <Tile $gap={3} $strong $color="#666"><Ico name="mirrorbody" size={13} />Mirror 1</Tile>
              </Row>
              <Row $indent={60}>
                <Tile $gap={3} $strong $color="#666"><Ico name="toggle" size={13} />Toggle to Design 1</Tile>
              </Row>
              <Row $indent={44}>
                <Check />
                <Tile $gap={3} $strong $color="#666"><Ico name="sketch" size={13} />Sketch 22</Tile>
              </Row>
            </List>
          </TreeBody>
        </TreePanel>
        <Viewport><Part /></Viewport>
      </Main>

      <PromptBar>
        <PromptName><Ico name="promptbar" size={16} />PromptBar</PromptName>
        <PromptText>Select geometry or features to edit, or click on Solids commands to create 3D features.</PromptText>
        <PromptTools>
          <PromptTool $w={12} $fs={12}>A</PromptTool>
          <PromptTool $w={12} $fs={9}>A</PromptTool>
          <PromptTool $w={14}>≈</PromptTool>
          <PromptTool $w={14}>▼</PromptTool>
          <PromptTool $w={12}>⇩</PromptTool>
          <PromptTool $w={14}>✕</PromptTool>
        </PromptTools>
      </PromptBar>

      <StatusBar>
        <StatusText>0 items are selected</StatusText>
        <FindBox>Find a command</FindBox>
        {['arrowgo', 'zoomarea', 'zoom', 'fit', 'views', 'spin', 'flower', 'shaded', 'shaded2'].map(n => (
          <StatusSlot key={n}><Ico name={n} size={13} /></StatusSlot>
        ))}
        <StatusSlot $w={16}><Ico name="minus" /></StatusSlot>
        <Slider><SliderKnob /></Slider>
        <StatusSlot $w={16}><Ico name="plus" /></StatusSlot>
        <StatusSlot $w={20}><Ico name="redtube" /></StatusSlot>
        <StatusSlot $w={22}><Ico name="reddot" /></StatusSlot>
        <StatusSlot $w={22}><Ico name="greenup" /></StatusSlot>
      </StatusBar>
      <BlackBar $h={17} />

      <Caption>
        <div>then right click and select move to synchronous then a tab</div>
        <div>will appear and select "select only" and click ok</div>
      </Caption>
    </Page>
  )
}
